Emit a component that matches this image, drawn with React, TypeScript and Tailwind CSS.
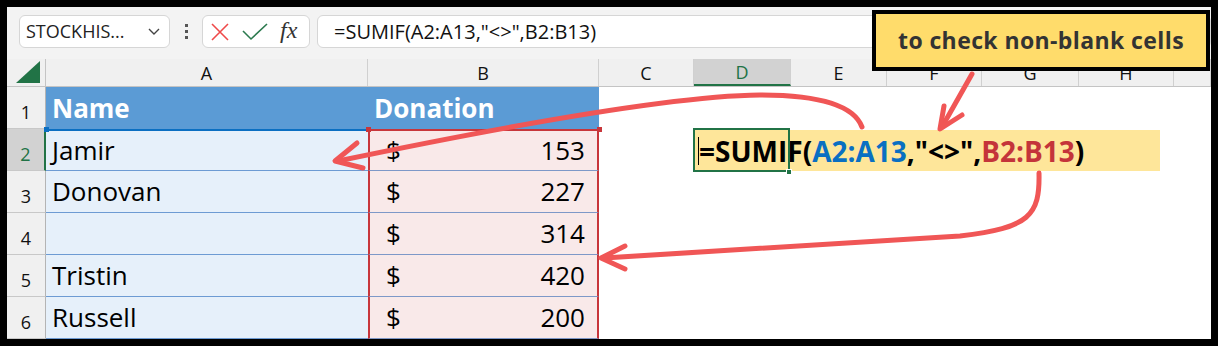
const cols = [
  { l: "A", w: "w-[322px]" },
  { l: "B", w: "w-[231px]" },
  { l: "C", w: "w-[95px]" },
  { l: "D", w: "w-[97px]" },
  { l: "E", w: "w-[96px]" },
  { l: "F", w: "w-[95px]" },
  { l: "G", w: "w-[97px]" },
  { l: "H", w: "w-[95px]" },
  { l: "", w: "flex-1" },
];

const rows = [
  { n: 2, name: "Jamir", amt: "153" },
  { n: 3, name: "Donovan", amt: "227" },
  { n: 4, name: "", amt: "314" },
  { n: 5, name: "Tristin", amt: "420" },
  { n: 6, name: "Russell", amt: "200" },
];

const cellFont = { fontFamily: "'Open Sans', 'Noto Sans', sans-serif" };

function Toolbar() {
  return (
    <div className="h-[52px] bg-[#f3f3f3] flex items-start pt-[8px] pl-[12px] font-['Open_Sans',sans-serif]">
      <div className="w-[151px] h-[33px] bg-white border border-[#d6d6d6] rounded-[6px] flex items-center pl-[6px] pr-[8px] text-[18px] text-[#222]">
        <span className="flex-1">STOCKHIS...</span>
        <svg width="14" height="10" viewBox="0 0 14 10">
          <path d="M2 2 L7 7 L12 2" fill="none" stroke="#444" strokeWidth="1.4" />
        </svg>
      </div>
      <div className="w-[32px] h-[33px] flex flex-col items-center justify-center gap-[3px]">
        <span className="w-[3px] h-[3px] bg-[#555]" />
        <span className="w-[3px] h-[3px] bg-[#555]" />
        <span className="w-[3px] h-[3px] bg-[#555]" />
      </div>
      <div className="w-[108px] h-[33px] bg-white border border-[#d6d6d6] rounded-[6px] flex items-center pl-[7px] gap-[12px]">
        <svg width="20" height="20" viewBox="0 0 20 20">
          <path d="M2 2 L18 18 M18 2 L2 18" stroke="#ef4a4a" strokeWidth="1.6" />
        </svg>
        <svg width="26" height="20" viewBox="0 0 26 20">
          <path d="M1 9 L9 17 L25 2" fill="none" stroke="#2c7a4f" strokeWidth="1.6" />
        </svg>
        <span className="text-[24px] italic text-[#333] font-['Liberation_Serif',serif] leading-none -mt-[4px]">
          fx
        </span>
      </div>
      <div className="flex-1 h-[33px] ml-[7px] bg-white border border-[#d6d6d6] rounded-[6px] flex items-center pl-[16px] text-[20px] text-[#111]">
        =SUMIF(A2:A13,"&lt;&gt;",B2:B13)
      </div>
    </div>
  );
}

function HeaderRow() {
  return (
    <div className="h-[28px] flex bg-[#f0f0f0] border-b border-[#c4c4c4] font-['Open_Sans',sans-serif] text-[18px]">
      <div className="w-[39px] border-r border-[#c4c4c4] flex items-end justify-end pr-[3px] pb-[3px]">
        <svg width="26" height="22" viewBox="0 0 26 22">
          <path d="M24 0 L24 22 L0 22 Z" fill="#217346" />
        </svg>
      </div>
      {cols.map((c) => (
        <div
          key={c.l + c.w}
          className={
            c.w +
            " flex items-center justify-center pt-[2px] border-r border-[#d0d0d0] " +
            (c.l === "D"
              ? "bg-[#d2d2d2] text-[#217346] border-b-2 border-b-[#217346]"
              : "text-[#111]")
          }
        >
          {c.l}
        </div>
      ))}
    </div>
  );
}

function RowHead({ n, active }: { n: number; active?: boolean }) {
  return (
    <div
      className={
        "w-[39px] shrink-0 flex items-end justify-center pb-[2px] text-[18px] font-['Open_Sans',sans-serif] border-b border-[#c8c8c8] " +
        (active
          ? "bg-[#d2d2d2] text-[#217346] border-r-2 border-r-[#217346]"
          : "bg-[#f0f0f0] text-[#111] border-r border-r-[#b4b4b4]")
      }
    >
      {n}
    </div>
  );
}

function FormulaCell() {
  return (
    <div className="flex-1 bg-white relative flex items-center">
      <div
        className="w-[467px] h-[41px] mt-[1px] bg-[#fee69a] flex items-center pl-[6px] text-[28px] font-bold text-black whitespace-pre"
        style={cellFont}
      >
        =SUMIF(<span className="text-[#0a6fc2]">A2:A13</span>,"&lt;&gt;",<span className="text-[#c4343a]">B2:B13</span>)
      </div>
      {/* active cell outline */}
      <div className="absolute left-0 -top-[1px] w-[97px] h-[44px] border-2 border-[#217346]" />
      <div className="absolute left-[5px] top-[8px] w-[1px] h-[28px] bg-black" />
      <div className="absolute left-[93px] top-[40px] w-[6px] h-[6px] bg-[#217346] border border-white" />
    </div>
  );
}

function Sheet() {
  return (
    <div>
      <div className="h-[42px] flex">
        <RowHead n={1} />
        <div
          className="w-[322px] bg-[#5b9bd5] text-white font-bold text-[26px] flex items-center pl-[6px]"
          style={cellFont}
        >
          Name
        </div>
        <div
          className="w-[231px] bg-[#5b9bd5] text-white font-bold text-[26px] flex items-center pl-[6px]"
          style={cellFont}
        >
          Donation
        </div>
        <div className="flex-1 bg-white" />
      </div>
      {rows.map((r) => (
        <div key={r.n} className="h-[42px] flex">
          <RowHead n={r.n} active={r.n === 2} />
          <div
            className={
              "w-[322px] bg-[#e6f0fa] border-b border-[#6d9bd3] flex items-center pl-[6px] text-[26px] text-black " +
              (r.n === 2 ? "border-t-2 border-t-[#0b6fc2]" : "")
            }
            style={cellFont}
          >
            {r.name}
          </div>
          <div
            className={
              "w-[231px] bg-[#f9e9e9] border-x-2 border-x-[#c8363b] border-b border-b-[#7e98c8] flex items-center pl-[16px] pr-[12px] text-[26px] text-black " +
              (r.n === 2 ? "border-t-2 border-t-[#c8363b]" : "")
            }
            style={cellFont}
          >
            <span className="flex-1">$</span>
            <span>{r.amt}</span>
          </div>
          <div className="w-[94px] bg-white" />
          {r.n === 2 ? <FormulaCell /> : <div className="flex-1 bg-white" />}
        </div>
      ))}
    </div>
  );
}

function Arrows() {
  const red = "#f05656";
  return (
    <svg
      className="absolute inset-0 pointer-events-none"
      width="1218"
      height="346"
      viewBox="0 0 1218 346"
    >
      <g fill="none" stroke={red} strokeWidth="5" strokeLinecap="round" strokeLinejoin="round">
        <path d="M862 127 Q850 95 760 95 Q650 96 338 161" />
        <path d="M357 143 L335 161 L363 168" />
        <path d="M972 74 L942 127" />
        <path d="M944 106 L940 129 L962 115" />
        <path d="M1039 173 C1040 215 1030 228 960 236 L604 258" />
        <path d="M625 246 L601 258 L625 269" />
      </g>
      {/* selection handles */}
      <rect x="44" y="127" width="5" height="5" fill="#0b6fc2" />
      <rect x="366" y="127" width="5" height="5" fill="#c8363b" />
      <rect x="597" y="127" width="5" height="5" fill="#c8363b" />
    </svg>
  );
}

export default function App() {
  return (
    <div className="relative w-[1218px] h-[346px] bg-black p-[7px]">
      <div className="h-full bg-white overflow-hidden">
        <Toolbar />
        <HeaderRow />
        <Sheet />
      </div>
      <Arrows />
      <div className="absolute left-[872px] top-[10px] w-[338px] h-[61px] bg-[#ffdc6b] border-4 border-black flex items-center justify-center text-[23px] tracking-[0.4px] font-bold text-[#333] font-['Open_Sans',sans-serif]">
        to check non-blank cells
      </div>
    </div>
  );
}
